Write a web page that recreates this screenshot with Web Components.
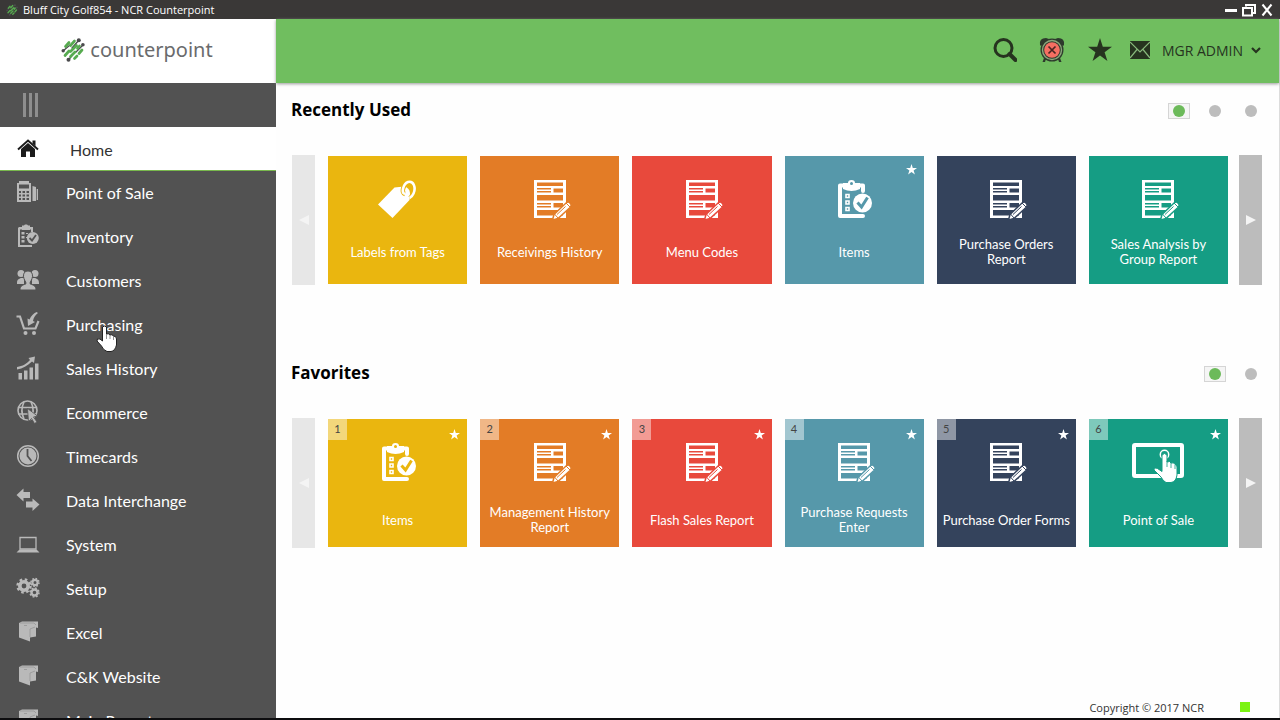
<!DOCTYPE html>
<html lang="en">
<head>
<meta charset="utf-8">
<title>Bluff City Golf854 - NCR Counterpoint</title>
<style>
    html, body {
        margin: 0;
        height: 100%;
    }
    body {
        overflow: hidden;
        font-family: "Open Sans", "Noto Sans", sans-serif;
    }
</style>
</head>
<body>
<counter-app></counter-app>

<script>
const icons = {
    mark: `<svg viewBox="0 0 24 24" fill="none" stroke-linecap="round">
        <g stroke="#4b4b4d" stroke-width="1.300"><path d="M2 13L9 7M18 2L11 10M7.500 22L13 15M22 7L15 14"/></g>
        <g stroke="#57ab50" stroke-width="2.700"><path d="M4.500 8.500L8 4.500M9.500 7.500L13.500 3M4 17.500L8 13M9.500 13.500L15.500 7.500M16.500 10.500L18.500 8M9.500 18.500L14 14M13.500 20.500L16 18M18 15.500L21 12"/></g>
        <g fill="#4b4b4d"><circle cx="2.200" cy="12.800" r="1.700"/><circle cx="7.500" cy="21.700" r="2"/><circle cx="17.800" cy="2.300" r="2"/><circle cx="21.900" cy="6.800" r="1.800"/></g></svg>`,
    home: `<svg viewBox="0 0 24 24"><path fill="none" stroke="currentColor" stroke-width="2" d="M2 12.500L12 3.500L22 12.500"/><path d="M16.500 3.500H19.500V9L16.500 6.500zM5 12L12 6L19 12V20H14V14.500H10V20H5z"/></svg>`,
    pos: `<svg viewBox="0 0 24 24"><path fill-rule="evenodd" d="M1 3H3V1H13V3H15V22H1zM3 4.500V8.500H13V4.500zM3 11V13H5V11zM6.500 11V13H9V11zM10.500 11V13H13V11zM3 14.500V16.500H5V14.500zM6.500 14.500V16.500H9V14.500zM10.500 14.500V16.500H13V14.500zM3 18V20H5V18zM6.500 18V20H9V18zM10.500 18V20H13V18z"/><path d="M16.500 6L20 7V21H16.500z"/><path d="M20.700 9H22V20H20.700z"/></svg>`,
    inventory: `<svg viewBox="0 0 24 24"><path d="M3 3H6V1.500H8C8 0 12 0 12 1.500H14V3H17V8H15V5.500H4V21H16V23H2V4z"/><path d="M6 2.500H14V6H6z"/><path d="M5.500 8H8.500V10.500H5.500zM5.500 12H8.500V14.500H5.500zM5.500 16H8.500V18.500H5.500zM10 9H12V10H10zM10 13H11V14H10z"/><circle cx="16.800" cy="14" r="6"/><path fill="none" stroke="#525252" stroke-width="1.800" d="M13.500 14L16 16.500L20 11"/></svg>`,
    customers: `<svg viewBox="0 0 24 24"><circle cx="5" cy="5.500" r="3.500"/><circle cx="19" cy="5.500" r="3.500"/><path d="M1 15C1 11 3 11 5 10H8V16H1zM23 15C23 11 21 11 19 10H16V16H23z"/><path stroke="#525252" stroke-width="1" d="M12 3C15 3 16.800 5 16.500 8.500C16 11.500 15 13 14.200 14V16C17 17 20 17.500 20 22H4C4 17.500 7 17 9.800 16V14C9 13 8 11.500 7.500 8.500C7.200 5 9 3 12 3z"/></svg>`,
    purchasing: `<svg viewBox="0 0 24 24"><path fill="none" stroke="currentColor" stroke-width="2.200" d="M0.500 4.500H4L8 16.500H19.500L22.500 9"/><circle cx="9.500" cy="21" r="2"/><circle cx="18" cy="21" r="2"/><path d="M20.500 0L22 1C19 3 17.500 6 17 9L19 10L12 14L11.500 6.500L13.500 7.500C15 4 17.500 1.500 20.500 0z"/></svg>`,
    sales: `<svg viewBox="0 0 24 24"><path d="M2.500 17H6V23.500H2.500zM8 14.500H11.500V23.500H8zM13.500 11.500H17V23.500H13.500zM19 7.500H22.500V23.500H19z"/><path d="M1 11C7 10 10 8 14 4L12.500 2L19 0.500L18 7L16 5.500C11 10 7 12.500 1 13.500z"/></svg>`,
    ecommerce: `<svg viewBox="0 0 24 24"><g fill="none" stroke="currentColor" stroke-width="1.600"><circle cx="11.500" cy="10.500" r="9.500"/><path d="M2 7.500H21M2 14H21M8 2C5 8 5 13 8 19M15 2C18 8 18 13 15 19"/></g><path stroke="#525252" stroke-width="0.800" d="M11.500 8.500L21.500 16L17.500 17L21 22L18.500 23.500L15.500 18.500L12.500 21.500z"/></svg>`,
    clock: `<svg viewBox="0 0 24 24"><circle cx="12" cy="12" r="10.300" fill="none" stroke="currentColor" stroke-width="1.500"/><circle cx="12" cy="12" r="8.500"/><path fill="none" stroke="#525252" stroke-width="1.800" d="M11.500 5V12L15.500 17"/></svg>`,
    swap: `<svg viewBox="0 0 24 24"><path d="M0.500 7L7.500 0.500V4H14V10H7.500V13.500z"/><path d="M23.500 16.500L16.500 10.500V13.500H10V19.500H16.500V23z"/></svg>`,
    laptop: `<svg viewBox="0 0 24 24"><path fill="none" stroke="currentColor" stroke-width="1.300" d="M4 5.500H20V17H4z"/><path d="M3.500 17.500H20.500L23.500 20.500H0.500z"/></svg>`,
    gears: `<svg viewBox="0 0 24 24" fill="none" stroke="currentColor"><circle cx="8" cy="10" r="4.200" stroke-width="3.600"/><circle cx="8" cy="10" r="6.500" stroke-width="2.400" stroke-dasharray="2.550 2.550"/><circle cx="19" cy="6.500" r="2.600" stroke-width="2.200"/><circle cx="19" cy="6.500" r="4" stroke-width="1.500" stroke-dasharray="1.570 1.570"/><circle cx="18.500" cy="16.500" r="3" stroke-width="2.400"/><circle cx="18.500" cy="16.500" r="4.500" stroke-width="1.500" stroke-dasharray="1.770 1.770"/></svg>`,
    folder: `<svg viewBox="0 0 24 24"><path d="M3 3L6 1.500H22V8L20 7.500V16.500L14 17.500V21.500L3 17.500z"/><path fill="none" stroke="#8a8a8a" stroke-width="0.600" d="M4 3H18L20 5M14 17V9L19 7M8 5.500H11"/></svg>`,
    tag: `<svg viewBox="0 0 52 40"><path d="M6 24.500L22.500 7.500L32 6.500Q37.500 7.500 38 13L37.500 20L20.500 38z"/><path fill="none" stroke="var(--tile)" stroke-width="4.500" d="M33 14C29 13 31 4 36 2.500C43 1 44 9 41 15L38 18"/><path fill="none" stroke="currentColor" stroke-width="2.600" d="M33 14C29 13 31 4 36 2C42 0.500 44 8 41.500 13.500Q40 17 37.500 18"/></svg>`,
    form: `<svg viewBox="0 0 52 40"><path fill-rule="evenodd" d="M10 0H42V38H10zM13 2.500V6H39V2.500zM13 8V9.500H27V8zM13 11V12.500H27V11zM29.500 8.500V12.500H39V8.500zM13 15V20.500H39V15zM13 23V24.500H27V23zM13 26V27.500H27V26zM29.500 23V27.500H39V23zM13 30V35.500H39V30z"/><path fill="currentColor" stroke="var(--tile)" stroke-width="1.500" d="M30 34.500L42.500 22.500Q45.500 21 47 24.500Q47.500 26 46 27.500L34 38.500L28.500 40z"/><path fill="none" stroke="var(--tile)" stroke-width="1" d="M33 34.500L41.500 26.500M30.500 34L34 38M42 23L46 27"/></svg>`,
    items: `<svg viewBox="0 0 52 40"><path fill="none" stroke="currentColor" stroke-width="4" stroke-linejoin="round" stroke-linecap="round" d="M35 11V5.500H12V36H35"/><path d="M15 3H20Q20 0 23.500 0T27 3H32V9Q23.500 13 15 9z"/><circle cx="23.500" cy="3.500" r="1.500" fill="var(--tile)"/><g fill="none" stroke="currentColor" stroke-width="1.600"><path d="M18 14.500H21V17.500H18zM18 21H21V24H18zM18 27.500H21V30.500H18z"/></g><circle cx="34.500" cy="23" r="9.500"/><path fill="none" stroke="var(--tile)" stroke-width="3" d="M29.500 22.500L33.500 27L39.500 17.500"/></svg>`,
    touch: `<svg viewBox="0 0 52 40"><rect x="2" y="2" width="48" height="31" rx="1" fill="none" stroke="currentColor" stroke-width="4"/><circle cx="32.500" cy="11.500" r="4.200" fill="none" stroke="currentColor" stroke-width="1.500"/><path stroke="var(--tile)" stroke-width="1" d="M30 12Q32.500 9 35 12V19Q38 17.500 39 20Q42 19 43 21.500Q45 21.500 45 24V32Q44 39 39 39.500H34Q31 38 29 34L22 27Q22 24 25.500 25.500L30 28.500z"/><path fill="none" stroke="var(--tile)" stroke-width="0.800" d="M35 18V24M39 20V25M43 22V26"/></svg>`,
    star: `<svg viewBox="0 0 24 24"><path d="M12 0L14.800 8.800H24L16.600 14.200L19.400 23L12 17.600L4.600 23L7.400 14.200L0 8.800H9.200z"/></svg>`,
    search: `<svg viewBox="0 0 24 24" fill="none" stroke="currentColor"><circle cx="10.500" cy="10" r="8.500" stroke-width="3"/><path d="M16.500 16L22.500 22" stroke-width="4" stroke-linecap="round"/></svg>`,
    alarm: `<svg viewBox="0 0 26 26"><g fill="#2d3a2c"><path d="M1 8Q0 1 7 1L10 2L2 9zM25 8Q26 1 19 1L16 2L24 9zM5 21L7 22L6 25H3.500zM21 21L19 22L20 25H22.500z"/><circle cx="13" cy="13" r="11.500"/></g><circle cx="13" cy="13" r="9.500" fill="none" stroke="#8ba77b" stroke-width="1.400"/><circle cx="13" cy="13" r="7.800" fill="#f56f62"/><path fill="none" stroke="#4a2522" stroke-width="1.700" d="M9.500 9.500L16.500 16.500M16.500 9.500L9.500 16.500"/></svg>`,
    mail: `<svg viewBox="0 0 20 20"><path d="M0 1H20V19H0z"/><path fill="none" stroke="#88b97c" stroke-width="1.200" d="M0 2L10 12L20 2M0 18L7 9.500M20 18L13 9.500"/></svg>`,
    chevron: `<svg viewBox="0 0 10 10"><path fill="none" stroke="currentColor" stroke-width="2.200" d="M1 3L5 7L9 3"/></svg>`,
    minimize: `<svg viewBox="0 0 14 14"><path d="M1 6H13V9H1z"/></svg>`,
    restore: `<svg viewBox="0 0 14 14" fill="none" stroke="currentColor" stroke-width="2"><path d="M4 3.500V2H13V10H11M1 5H10V12.500H1z"/></svg>`,
    close: `<svg viewBox="0 0 14 14"><path fill="none" stroke="currentColor" stroke-width="2" d="M2.500 1.500L11.500 12.500M11.500 1.500L2.500 12.500"/></svg>`,
    left: `<svg viewBox="0 0 10 10"><path d="M0 5L10 0V10z"/></svg>`,
    right: `<svg viewBox="0 0 10 10"><path d="M10 5L0 0V10z"/></svg>`,
    hand: `<svg viewBox="0 0 22 28"><path fill="#fff" stroke="#222" stroke-width="1" d="M6.500 2Q8.500 0 10.500 2V9Q12.500 8 14 10Q16 9 17.500 11Q20.500 11 20.500 14V20Q19 26 15 26.500H11Q7 25 5.500 21L1 16Q0.500 13 4 14L6.500 16z"/><path fill="none" stroke="#777" stroke-width="0.800" d="M10.500 9V14M14 10V14M17.500 11V15"/></svg>`
};

const base = `
    * { box-sizing: border-box; }
    svg { display: block; fill: currentColor; width: 100%; height: 100%; }
    svg[fill="none"] { fill: none; }
    button { border: 0; padding: 0; margin: 0; background: none; color: inherit; font: inherit; }
    a { color: inherit; text-decoration: none; }`;

function render (el, css, html) {
    const template = document.createElement('template');
    template.innerHTML = `<style>${base}${css}</style>${html}`;
    el.attachShadow({ mode: 'open' }).appendChild(template.content.cloneNode(true));
}

class TitleBar extends HTMLElement {
    constructor () {
        super();
        render(this, `
            :host {
                display: flex;
                align-items: center;
                flex: none;
                height: 19px;
                padding: 0 6px;
                background: #3a3837;
                color: #fff;
                font-size: 11px;
                line-height: 19px;
            }
            i { width: 12px; height: 12px; margin-right: 5px; }
            span { flex: 1; }
            button { width: 14px; height: 14px; margin-left: 4px; }`, `
            <i>${icons.mark}</i>
            <span><slot></slot></span>
            <button aria-label="Minimize">${icons.minimize}</button>
            <button aria-label="Restore">${icons.restore}</button>
            <button aria-label="Close">${icons.close}</button>`);
    }
}

class NavItem extends HTMLElement {
    constructor () {
        super();
        render(this, `
            :host {
                display: block;
                color: #fff;
                font-family: Lato, sans-serif;
                font-size: 16px;
            }
            a { display: flex; align-items: center; height: 44px; padding: 0 0 2px 16px; }
            i { width: 24px; height: 24px; margin-right: 26px; color: #b9b9b9; }
            :host([active]) { background: #fff; color: #333; }
            :host([active]) a { padding-bottom: 0; box-shadow: inset 0 -1px #79b84d; }
            :host([active]) i { color: #1c1c1c; margin-right: 30px; }`, `
            <a href="#"><i>${icons[this.getAttribute('icon')]}</i><slot></slot></a>`);
    }
}

class SideNav extends HTMLElement {
    constructor () {
        super();
        render(this, `
            :host {
                display: flex;
                flex-direction: column;
                flex: none;
                width: 276px;
                overflow: hidden;
                background: #525252;
            }
            .logo {
                display: flex;
                align-items: center;
                justify-content: center;
                gap: 5px;
                flex: none;
                height: 64px;
                padding: 0 2px 2px 0;
                background: #fff;
                color: #6a6b6d;
                font-family: "Noto Sans", sans-serif;
                font-size: 20px;
                line-height: 28px;
            }
            .logo i { width: 24px; height: 24px; }
            .toggle {
                display: flex;
                align-items: center;
                gap: 3px;
                flex: none;
                height: 44px;
                padding-left: 23px;
            }
            .toggle b { width: 3px; height: 24px; background: #8e8e8e; }`, `
            <div class="logo"><i>${icons.mark}</i>counterpoint</div>
            <button class="toggle" aria-label="Collapse menu"><b></b><b></b><b></b></button>
            <nav><slot></slot></nav>`);
    }
}

class AppHeader extends HTMLElement {
    constructor () {
        super();
        render(this, `
            :host {
                box-sizing: border-box;
                display: flex;
                align-items: center;
                justify-content: flex-end;
                flex: none;
                height: 64px;
                padding: 0 18px 2px 0;
                background: #70be5f;
                color: #26331f;
                box-shadow: 0 1px 3px #999;
                font-size: 14px;
            }
            .tool { width: 24px; height: 24px; margin-right: 22px; }
            .tool.alarm { width: 26px; height: 26px; margin-right: 23px; }
            .tool.mail { width: 20px; height: 20px; margin: 0 12px 0 -4px; }
            .user { display: flex; align-items: center; gap: 8px; }
            .user i { width: 10px; height: 10px; }`, `
            <button class="tool" aria-label="Search">${icons.search}</button>
            <button class="tool alarm" aria-label="Alerts">${icons.alarm}</button>
            <button class="tool" aria-label="Favorites">${icons.star}</button>
            <button class="tool mail" aria-label="Mail">${icons.mail}</button>
            <button class="user"><slot></slot><i>${icons.chevron}</i></button>`);
    }
}

class MenuTile extends HTMLElement {
    constructor () {
        super();
        const number = this.getAttribute('number');
        render(this, `
            :host { display: block; min-width: 0; }
            button {
                display: flex;
                flex-direction: column;
                align-items: center;
                position: relative;
                width: 100%;
                height: 128px;
                padding-top: 24px;
                background: var(--tile);
                color: #fff;
                font-family: Lato, sans-serif;
                font-size: 13px;
                line-height: 15px;
            }
            .icon { flex: none; width: 52px; height: 40px; }
            .label {
                display: flex;
                align-items: center;
                justify-content: center;
                flex: 1;
                padding: 0 4px;
            }
            :host([number]) .label { padding-top: 10px; }
            .star { position: absolute; top: 8px; right: 7px; width: 11px; height: 11px; }
            :host([number]) .star { top: 10px; }
            .number {
                position: absolute;
                top: 0;
                left: 0;
                width: 19px;
                height: 21px;
                background: rgba(255, 255, 255, .45);
                color: #444;
                font-size: 11px;
                line-height: 20px;
            }`, `
            <button>
                ${number ? `<span class="number">${number}</span>` : ''}
                ${this.hasAttribute('starred') ? `<i class="star">${icons.star}</i>` : ''}
                <i class="icon">${icons[this.getAttribute('icon')]}</i>
                <span class="label"><slot></slot></span>
            </button>`);
        this.style.setProperty('--tile', this.getAttribute('color'));
    }
}

class TileSection extends HTMLElement {
    constructor () {
        super();
        const pages = Number(this.getAttribute('pages'));
        let dots = '';
        for (let i = 0; i < pages; i++) {
            dots += `<button aria-label="Page ${i + 1}"${i ? '' : ' class="on"'}></button>`;
        }
        render(this, `
            :host { display: block; height: 263px; padding: 0 17px 0 15px; }
            header { display: flex; align-items: center; height: 56px; }
            h2 {
                flex: 1;
                margin: 0;
                padding-bottom: 2px;
                color: #000;
                font-size: 17px;
                font-weight: 700;
                line-height: 24px;
            }
            .dots { display: flex; gap: 14px; }
            .dots button { width: 22px; height: 16px; border: 1px solid transparent; }
            .dots button::before {
                content: "";
                display: block;
                width: 12px;
                height: 12px;
                margin: auto;
                border-radius: 50%;
                background: #bdbdbd;
            }
            .dots .on { border-color: #d5d5d5; background: #f5f5f5; }
            .dots .on::before { background: #6cba5a; }
            .row { display: flex; align-items: center; margin-top: 16px; padding-left: 1px; }
            .arrow {
                display: grid;
                place-items: center;
                width: 23px;
                height: 130px;
                background: #bcbcbc;
                color: #f4f4f4;
            }
            .arrow.off { background: #e7e7e7; }
            .arrow i { width: 10px; height: 10px; }
            .tiles {
                display: grid;
                grid-template-columns: repeat(6, 1fr);
                gap: 13px;
                flex: 1;
                margin: 0 11px 0 13px;
            }`, `
            <header><h2>${this.getAttribute('heading')}</h2><div class="dots">${dots}</div></header>
            <div class="row">
                <button class="arrow off" aria-label="Previous"><i>${icons.left}</i></button>
                <div class="tiles"><slot></slot></div>
                <button class="arrow" aria-label="Next"><i>${icons.right}</i></button>
            </div>`);
    }
}

class CounterApp extends HTMLElement {
    constructor () {
        super();
        render(this, `
            :host {
                box-sizing: border-box;
                display: flex;
                flex-direction: column;
                height: 100vh;
                background: #fefefe;
                border-bottom: 2px solid #0d0d0f;
            }
            .body { display: flex; flex: 1; min-height: 0; }
            main {
                display: flex;
                flex-direction: column;
                flex: 1;
                min-width: 0;
                border-right: 1px solid #dcdcdc;
            }
            footer {
                display: flex;
                align-items: flex-start;
                justify-content: flex-end;
                gap: 36px;
                margin-top: auto;
                padding-right: 29px;
                color: #333;
                font-size: 11px;
                line-height: 20px;
            }
            footer i { width: 10px; height: 10px; margin-top: 4px; background: #7bf312; }
            .cursor { position: absolute; left: 96px; top: 325px; width: 22px; height: 28px; }`, `
            <title-bar>Bluff City Golf854 - NCR Counterpoint</title-bar>
            <div class="body">
                <side-nav>
                    <nav-item icon="home" active>Home</nav-item>
                    <nav-item icon="pos">Point of Sale</nav-item>
                    <nav-item icon="inventory">Inventory</nav-item>
                    <nav-item icon="customers">Customers</nav-item>
                    <nav-item icon="purchasing">Purchasing</nav-item>
                    <nav-item icon="sales">Sales History</nav-item>
                    <nav-item icon="ecommerce">Ecommerce</nav-item>
                    <nav-item icon="clock">Timecards</nav-item>
                    <nav-item icon="swap">Data Interchange</nav-item>
                    <nav-item icon="laptop">System</nav-item>
                    <nav-item icon="gears">Setup</nav-item>
                    <nav-item icon="folder">Excel</nav-item>
                    <nav-item icon="folder">C&amp;K Website</nav-item>
                    <nav-item icon="folder">Main Reports</nav-item>
                </side-nav>
                <main>
                    <app-header>MGR ADMIN</app-header>
                    <tile-section heading="Recently Used" pages="3">
                        <menu-tile icon="tag" color="#eab60f">Labels from Tags</menu-tile>
                        <menu-tile icon="form" color="#e37c26">Receivings History</menu-tile>
                        <menu-tile icon="form" color="#e8493c">Menu Codes</menu-tile>
                        <menu-tile icon="items" color="#5698aa" starred>Items</menu-tile>
                        <menu-tile icon="form" color="#34435c">Purchase Orders Report</menu-tile>
                        <menu-tile icon="form" color="#159d84">Sales Analysis by Group Report</menu-tile>
                    </tile-section>
                    <tile-section heading="Favorites" pages="2">
                        <menu-tile icon="items" color="#eab60f" number="1" starred>Items</menu-tile>
                        <menu-tile icon="form" color="#e37c26" number="2" starred>Management History Report</menu-tile>
                        <menu-tile icon="form" color="#e8493c" number="3" starred>Flash Sales Report</menu-tile>
                        <menu-tile icon="form" color="#5698aa" number="4" starred>Purchase Requests Enter</menu-tile>
                        <menu-tile icon="form" color="#34435c" number="5" starred>Purchase Order Forms</menu-tile>
                        <menu-tile icon="touch" color="#159d84" number="6" starred>Point of Sale</menu-tile>
                    </tile-section>
                    <footer>Copyright © 2017 NCR<i></i></footer>
                </main>
            </div>
            <div class="cursor">${icons.hand}</div>`);
    }
}

customElements.define('title-bar', TitleBar);
customElements.define('nav-item', NavItem);
customElements.define('side-nav', SideNav);
customElements.define('app-header', AppHeader);
customElements.define('menu-tile', MenuTile);
customElements.define('tile-section', TileSection);
customElements.define('counter-app', CounterApp);
</script>
</body>
</html>
